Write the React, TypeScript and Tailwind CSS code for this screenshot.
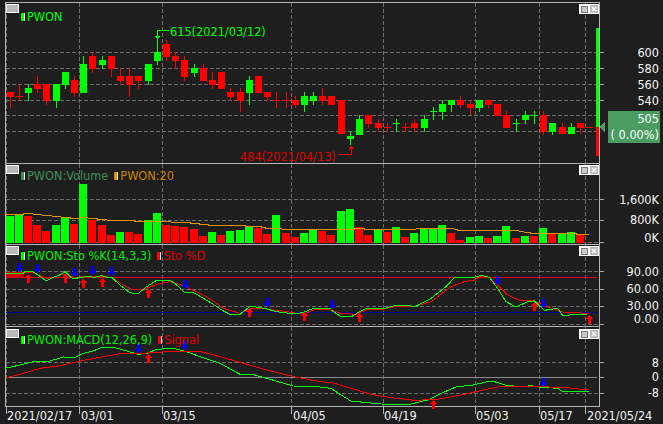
import React from 'react';

type P = [number, number];
type Candle = [number, number, number, number, number, 'r' | 'g'];

const RED = '#ff0000';
const GREEN = '#00ff00';
const GRID = '#6c6c6c';

// coordinates below were read at 3x, hence the /3
const pts = (arr: P[], ox: number, oy: number) => arr.map(([x, y]) => `${ox + x / 3},${oy + y / 3}`).join(' ');

const candlesA: Candle[] = [
  [31, 276, 323, 276, 291, 'r'], [58, 252, 302, 288, 291, 'r'], [85, 252, 302, 264, 279, 'g'], [112, 228, 279, 252, 267, 'r'],
  [139, 252, 315, 252, 303, 'r'], [169, 252, 324, 252, 303, 'g'], [196, 216, 267, 216, 255, 'g'], [223, 228, 291, 240, 279, 'r'],
  [250, 168, 279, 192, 279, 'g'], [277, 156, 219, 168, 207, 'r'], [307, 168, 207, 180, 195, 'g'], [334, 168, 231, 168, 207, 'r'],
  [361, 204, 255, 228, 243, 'r'], [388, 204, 291, 228, 255, 'r'], [415, 228, 267, 228, 243, 'r'], [445, 192, 255, 192, 243, 'g'],
  [472, 108, 195, 156, 183, 'g'], [499, 120, 183, 132, 171, 'r'], [526, 156, 207, 168, 183, 'r'], [553, 168, 243, 180, 231, 'r'],
  [583, 192, 231, 204, 219, 'g'], [610, 192, 243, 204, 243, 'r'], [637, 216, 267, 240, 255, 'r'], [664, 216, 267, 216, 267, 'r'],
  [691, 264, 303, 276, 291, 'r'], [721, 264, 336, 276, 303, 'r'], [748, 228, 315, 240, 279, 'g'], [775, 228, 279, 228, 279, 'r'],
  [802, 276, 303, 276, 291, 'r'], [829, 276, 324, 300, 303, 'r'], [859, 276, 324, 300, 303, 'r'], [886, 288, 324, 300, 315, 'r'],
  [913, 276, 336, 288, 315, 'g'], [940, 276, 315, 288, 303, 'g'], [967, 264, 315, 288, 303, 'r'], [994, 288, 315, 288, 315, 'r'],
];

const candlesB: Candle[] = [
  [31, 300, 402, 300, 402, 'r'], [58, 393, 435, 408, 417, 'g'], [85, 345, 405, 357, 405, 'g'], [112, 345, 384, 345, 372, 'r'],
  [142, 357, 396, 369, 384, 'r'], [169, 369, 396, 381, 384, 'r'], [196, 357, 396, 369, 372, 'g'], [223, 369, 396, 381, 384, 'r'],
  [250, 357, 396, 369, 384, 'r'], [280, 345, 396, 357, 384, 'g'], [307, 321, 360, 333, 336, 'g'], [334, 300, 360, 312, 336, 'g'],
  [361, 300, 336, 300, 315, 'g'], [388, 288, 324, 300, 315, 'r'], [418, 300, 345, 312, 324, 'r'], [445, 300, 336, 300, 324, 'g'],
  [472, 300, 324, 300, 315, 'r'], [499, 312, 348, 312, 348, 'r'], [526, 333, 384, 345, 384, 'r'], [556, 357, 396, 369, 372, 'g'],
  [583, 333, 372, 345, 360, 'g'], [610, 333, 372, 345, 348, 'g'], [637, 333, 405, 345, 396, 'r'], [664, 369, 405, 369, 396, 'g'],
  [694, 369, 402, 381, 402, 'r'], [721, 369, 402, 381, 402, 'g'], [748, 369, 402, 369, 384, 'r'],
];

const volA: [number, number, 'r' | 'g'][] = [
  [30, 159, 'g'], [57, 156, 'g'], [84, 159, 'r'], [111, 186, 'r'], [138, 204, 'r'], [168, 186, 'g'], [195, 165, 'g'], [222, 183, 'r'],
  [249, 63, 'g'], [276, 171, 'r'], [306, 186, 'r'], [333, 216, 'r'], [360, 207, 'g'], [387, 207, 'r'], [414, 213, 'r'], [444, 171, 'g'],
  [471, 150, 'g'], [498, 186, 'r'], [525, 189, 'r'], [552, 192, 'r'], [582, 198, 'r'], [609, 219, 'r'], [636, 207, 'g'], [663, 216, 'r'],
  [690, 204, 'g'], [720, 201, 'g'], [747, 189, 'g'], [774, 195, 'r'], [801, 213, 'r'], [828, 156, 'g'], [858, 210, 'r'], [885, 222, 'r'],
  [912, 210, 'g'], [939, 201, 'g'], [966, 204, 'r'], [993, 216, 'r'],
];

const volB: [number, number, 'r' | 'g'][] = [
  [30, 144, 'g'], [57, 138, 'g'], [84, 192, 'r'], [111, 216, 'r'], [141, 198, 'g'], [168, 207, 'r'], [195, 192, 'g'], [222, 222, 'r'],
  [249, 210, 'g'], [279, 195, 'g'], [306, 195, 'g'], [333, 186, 'g'], [360, 210, 'r'], [387, 231, 'r'], [417, 222, 'g'], [444, 219, 'g'],
  [471, 225, 'r'], [498, 219, 'g'], [525, 189, 'g'], [555, 225, 'r'], [582, 219, 'g'], [609, 219, 'r'], [636, 195, 'g'], [663, 210, 'r'],
  [693, 210, 'g'], [720, 207, 'g'], [747, 213, 'r'],
];

const maA: P[] = [[15, 150], [20, 154], [70, 154], [72, 151], [98, 151], [100, 154], [125, 154], [127, 157], [155, 157], [157, 160], [182, 160], [184, 163], [210, 163], [212, 166], [237, 166], [239, 163], [263, 163], [265, 166], [292, 166], [294, 169], [320, 169], [322, 172], [402, 172], [404, 175], [512, 175], [514, 178], [570, 178], [572, 181], [597, 181], [599, 184], [624, 184], [626, 187], [735, 187], [737, 190], [783, 190], [785, 193], [795, 193], [797, 196], [845, 196], [847, 199], [993, 199]];
const maB: P[] = [[0, 199], [70, 199], [72, 196], [100, 196], [102, 199], [210, 199], [212, 199], [345, 196], [368, 196], [370, 199], [379, 199], [381, 202], [563, 202], [565, 205], [578, 205], [580, 208], [597, 208], [599, 211], [735, 211], [737, 214], [773, 214]];

const stoKA: P[] = [[18, 84], [70, 84], [75, 79], [95, 79], [115, 90], [138, 108], [160, 97], [175, 92], [195, 80], [210, 95], [222, 102], [240, 97], [265, 95], [285, 97], [305, 92], [320, 97], [335, 97], [360, 120], [385, 140], [400, 145], [415, 145], [440, 125], [470, 106], [510, 106], [528, 118], [553, 142], [583, 144], [610, 160], [640, 178], [665, 195], [690, 208], [720, 208], [750, 184], [775, 187], [800, 192], [830, 200], [860, 204], [890, 207], [915, 200], [940, 190], [993, 192]];
const stoDA: P[] = [[18, 88], [60, 84], [95, 82], [120, 92], [140, 100], [160, 97], [185, 88], [200, 88], [222, 98], [250, 95], [290, 95], [320, 95], [340, 100], [370, 120], [395, 133], [415, 135], [440, 130], [470, 118], [510, 110], [530, 115], [560, 127], [610, 150], [640, 168], [670, 190], [720, 205], [750, 190], [800, 192], [860, 200], [890, 205], [915, 205], [950, 192], [993, 192]];
const stoKB: P[] = [[0, 195], [30, 215], [60, 216], [85, 200], [105, 190], [155, 192], [185, 183], [210, 181], [255, 184], [300, 160], [345, 125], [370, 98], [400, 97], [430, 97], [450, 91], [475, 97], [500, 130], [525, 170], [555, 186], [590, 170], [610, 168], [640, 196], [680, 190], [695, 211], [770, 207]];
const stoDB: P[] = [[0, 195], [30, 205], [75, 208], [105, 195], [155, 193], [185, 186], [250, 184], [300, 170], [360, 125], [400, 110], [430, 105], [450, 93], [475, 97], [530, 150], [570, 168], [605, 166], [640, 182], [700, 202], [773, 205]];

const macdA: P[] = [[15, 130], [60, 120], [100, 110], [150, 108], [190, 96], [225, 97], [250, 85], [280, 78], [305, 67], [340, 67], [370, 75], [415, 88], [440, 85], [470, 73], [520, 70], [560, 80], [600, 95], [660, 115], [720, 148], [755, 148], [800, 160], [880, 183], [950, 185], [993, 190]];
const sigA: P[] = [[18, 158], [60, 148], [120, 130], [180, 122], [240, 108], [300, 97], [360, 86], [440, 84], [500, 80], [600, 79], [660, 95], [740, 118], [800, 135], [880, 155], [950, 168], [993, 174]];
const macdB: P[] = [[0, 190], [30, 210], [60, 228], [100, 232], [150, 237], [235, 238], [290, 225], [330, 205], [375, 186], [425, 180], [470, 170], [490, 170], [525, 181], [570, 185], [600, 182], [625, 186], [680, 190], [695, 200], [773, 200]];
const sigB: P[] = [[0, 172], [60, 190], [120, 208], [180, 218], [250, 226], [320, 223], [400, 208], [470, 192], [500, 186], [625, 185], [680, 187], [735, 190], [745, 193], [773, 193]];

const vGrid = [6, 79, 162, 291, 383, 475, 539, 585];

const Candles = ({ data, ox }: { data: Candle[]; ox: number }) => (
  <>
    {data.map(([x, wt, wb, bt, bb, c], i) => {
      const cx = ox + Math.floor(x / 3);
      const fill = c === 'r' ? RED : GREEN;
      return (
        <g key={i} fill={fill}>
          <rect x={cx} y={wt / 3} width={1} height={(wb - wt) / 3} />
          <rect x={cx - 3} y={bt / 3} width={7} height={(bb - bt) / 3} />
        </g>
      );
    })}
  </>
);

// arrows built from pixel rows so the head stays solid
const ArrowUp = ({ x, top, color = RED }: { x: number; top: number; color?: string }) => (
  <g fill={color}>
    <rect x={x} y={top} width={1} height={1} />
    <rect x={x - 1} y={top + 1} width={3} height={1} />
    <rect x={x - 2} y={top + 2} width={5} height={1} />
    <rect x={x - 3} y={top + 3} width={7} height={1} />
    <rect x={x - 1} y={top + 4} width={3} height={5} />
  </g>
);

const ArrowDown = ({ x, bottom, color = '#0000ff' }: { x: number; bottom: number; color?: string }) => (
  <g fill={color}>
    <rect x={x} y={bottom - 1} width={1} height={1} />
    <rect x={x - 1} y={bottom - 2} width={3} height={1} />
    <rect x={x - 2} y={bottom - 3} width={5} height={1} />
    <rect x={x - 3} y={bottom - 4} width={7} height={1} />
    <rect x={x - 1} y={bottom - 9} width={3} height={5} />
  </g>
);

const Grid = ({ top, bottom, rows, ticks = rows }: { top: number; bottom: number; rows: number[]; ticks?: number[] }) => (
  <g stroke={GRID} strokeWidth={1} fill="none">
    {vGrid.map((x) => (
      <line key={x} x1={x + 0.5} x2={x + 0.5} y1={top} y2={bottom} strokeDasharray="4 2" />
    ))}
    {rows.map((y) => (
      <line key={y} x1={6} x2={599} y1={y + 0.5} y2={y + 0.5} strokeDasharray="4 2" />
    ))}
    {ticks.map((y) => (
      <line key={y} x1={599} x2={604} y1={y + 0.5} y2={y + 0.5} stroke="#a8a8a8" />
    ))}
  </g>
);

const Marker = ({ color }: { color: string }) => (
  <span className={`block w-[4px] h-[8px] rounded-[1px] border-r border-white ${color}`} />
);

const PaneButtons = ({ top }: { top: string }) => (
  <>
    <div className={`absolute left-0 w-[13px] h-[9px] bg-[#b9b9b9] border border-white ${top}`} />
    <div className={`absolute right-0 flex ${top}`}>
      <div className="w-[10px] h-[10px] bg-white flex items-center justify-center">
        <div className="w-[7px] h-[7px] bg-[#c8c8c8] border border-[#777]" />
      </div>
      <div className="w-[10px] h-[10px] bg-[#b9b9b9] border border-white flex items-center justify-center">
        <svg width="6" height="6" viewBox="0 0 6 6"><path d="M1 1L5 5M5 1L1 5" stroke="#fff" strokeWidth="1.4" /></svg>
      </div>
    </div>
  </>
);

const Pane = ({ y, h, legend, btn, bottom, axis, children }: { y: number; h: number; legend: React.ReactNode; btn: string; bottom?: boolean; axis: React.ReactNode; children: React.ReactNode }) => (
  <div className="flex">
    <div className={`relative ml-[5px] w-[595px] border-x border-t border-[#b4b4b4] ${bottom ? 'border-b' : ''} ${h === 161 ? 'h-[161px]' : h === 82 ? 'h-[82px]' : 'h-[81px]'}`}>
      <svg
        className="block w-[593px] h-full overflow-visible"
        viewBox={`6 ${y + 1} 593 ${bottom ? h - 2 : h - 1}`}
        preserveAspectRatio="none"
        shapeRendering="crispEdges"
      >
        {children}
      </svg>
      <PaneButtons top={btn} />
      {legend}
    </div>
    {axis}
  </div>
);

const Line = ({ points, color }: { points: string; color: string }) => (
  <polyline points={points} fill="none" stroke={color} strokeWidth={1} />
);

const AxisText = ({ children, className = '' }: { children: React.ReactNode; className?: string }) => (
  <span className={`block h-[13px] leading-[13px] ${className}`}>{children}</span>
);

export default function App() {
  return (
    <div className="w-[663px] h-[424px] bg-[#1e1e1e] pt-[2px] text-[12.6px] text-[#f4f4f4] font-['DejaVu_Sans_Condensed','DejaVu_Sans','Noto_Sans',sans-serif]">
      {/* price */}
      <Pane
        y={2}
        h={161}
        btn="top-[1px]"
        legend={
          <>
            <div className="absolute left-[15px] top-[6px] flex items-center gap-[2px] text-[#00ff00] leading-[16px]">
              <Marker color="bg-[#00ff00]" />
              <span>PWON</span>
            </div>
            <span className="absolute left-[164px] top-[21px] leading-[16px] text-[#00ff00]">615(2021/03/12)</span>
            <span className="absolute left-[234px] top-[146px] leading-[16px] text-[#e00000]">484(2021/04/13)</span>
          </>
        }
        axis={
          <div className="flex-1 flex flex-col items-end gap-[3px] pr-[4px] pt-[44px]">
            <AxisText>600</AxisText>
            <AxisText>580</AxisText>
            <AxisText>560</AxisText>
            <AxisText>540</AxisText>
            <div className="mt-[1px] w-[52px] h-[32px] -mr-[1px] bg-[#4a9c62] flex flex-col items-end pr-[1px] text-white leading-[16px]">
              <span>505</span>
              <span>( 0.00%)</span>
            </div>
          </div>
        }
      >
        <Grid top={3} bottom={163} rows={[52, 68, 84, 100, 115, 131]} ticks={[52, 68, 84, 100]} />
        <Candles data={candlesA} ox={0} />
        <Candles data={candlesB} ox={331} />
        <rect x={586} y={127} width={7} height={1} fill={RED} />
        <rect x={596} y={28} width={3} height={99} fill={GREEN} />
        <rect x={596} y={127} width={3} height={29} fill={RED} />
        <polygon points="599,127 605,122 605,133" fill="#4a9c62" />
        {/* high / low leader lines */}
        <path d="M157 38V30H169" stroke={GREEN} fill="none" />
        <polygon points="155,36 160,36 157.5,39" fill={GREEN} />
        <path d="M351 148V154H339" stroke={RED} fill="none" />
        <polygon points="349,149 354,149 351.5,146" fill={RED} />
      </Pane>

      {/* volume */}
      <Pane
        y={163}
        h={81}
        btn="top-[1px]"
        legend={
          <div className="absolute left-[15px] top-[4px] flex items-center leading-[16px]">
            <Marker color="bg-[#3f8f57]" />
            <span className="ml-[2px] text-[#3f8f57]">PWON:Volume</span>
            <span className="ml-[6px]"><Marker color="bg-[#e09000]" /></span>
            <span className="ml-[2px] text-[#c98500]">PWON:20</span>
          </div>
        }
        axis={
          <div className="flex-1 flex flex-col items-end pr-[4px] pt-[30px]">
            <AxisText>1,600K</AxisText>
            <AxisText className="mt-[7px]">800K</AxisText>
            <AxisText className="mt-[5px]">0K</AxisText>
          </div>
        }
      >
        <Grid top={164} bottom={244} rows={[199, 220, 242]} />
        {volA.map(([x, t, c]) => (
          <rect key={x} x={Math.floor(x / 3) - 4} y={163 + t / 3} width={8} height={80 - t / 3} fill={c === 'r' ? RED : GREEN} />
        ))}
        {volB.map(([x, t, c]) => (
          <rect key={x} x={331 + Math.floor(x / 3) - 4} y={163 + t / 3} width={8} height={80 - t / 3} fill={c === 'r' ? RED : GREEN} />
        ))}
        <Line points={pts(maA, 0, 163)} color="#e39300" />
        <Line points={pts(maB, 331, 163)} color="#e39300" />
      </Pane>

      {/* stochastic */}
      <Pane
        y={244}
        h={82}
        btn="top-[1px]"
        legend={
          <div className="absolute left-[15px] top-[3px] flex items-center leading-[16px]">
            <Marker color="bg-[#00ff00]" />
            <span className="ml-[2px] text-[#00ee00]">PWON:Sto %K(14,3,3)</span>
            <span className="ml-[6px]"><Marker color="bg-[#ff0000]" /></span>
            <span className="ml-[2px] text-[#e00000]">Sto %D</span>
          </div>
        }
        axis={
          <div className="flex-1 flex flex-col items-end gap-[4px] pr-[4px] pt-[21px]">
            <AxisText>90.00</AxisText>
            <AxisText>60.00</AxisText>
            <AxisText>30.00</AxisText>
            <AxisText className="-mt-[4px]">0.00</AxisText>
          </div>
        }
      >
        <Grid top={245} bottom={326} rows={[271, 289, 306, 324]} />
        <rect x={6} y={272} width={18} height={5} fill="#d00000" />
        <rect x={6} y={277} width={591} height={1} fill="#e00000" />
        <rect x={6} y={312} width={591} height={1} fill="#000090" />
        <Line points={pts(stoDA, 0, 245)} color={RED} />
        <Line points={pts(stoKA, 0, 245)} color={GREEN} />
        <Line points={pts(stoDB, 331, 245)} color={RED} />
        <Line points={pts(stoKB, 331, 245)} color={GREEN} />
        {[[19, 272], [37, 273], [74, 277], [92, 275], [111, 276], [185, 289], [267, 307], [332, 309], [497, 285], [543, 308]].map(([x, b]) => (
          <ArrowDown key={x} x={x} bottom={b} />
        ))}
        {[[28, 274], [65, 274], [83, 279], [102, 278], [148, 289], [249, 308], [304, 312], [359, 313], [534, 302], [589, 315]].map(([x, t]) => (
          <ArrowUp key={x} x={x} top={t} />
        ))}
      </Pane>

      {/* macd */}
      <Pane
        y={326}
        h={81}
        bottom
        btn="top-[2px]"
        legend={
          <div className="absolute left-[15px] top-[5px] flex items-center leading-[16px]">
            <Marker color="bg-[#00ff00]" />
            <span className="ml-[2px] text-[#00ee00]">PWON:MACD(12,26,9)</span>
            <span className="ml-[6px]"><Marker color="bg-[#ff0000]" /></span>
            <span className="ml-[2px] text-[#e00000]">Signal</span>
          </div>
        }
        axis={
          <div className="flex-1 flex flex-col items-end pr-[4px] pt-[30px]">
            <AxisText>8</AxisText>
            <AxisText className="mt-[1px]">0</AxisText>
            <AxisText className="mt-[3px]">-8</AxisText>
          </div>
        }
      >
        <Grid top={327} bottom={406} rows={[362, 393]} />
        <rect x={6} y={377} width={591} height={1} fill="#8c8c8c" />
        <rect x={599} y={377} width={5} height={1} fill="#a8a8a8" />
        <Line points={pts(macdA, 0, 325)} color={GREEN} />
        <Line points={pts(sigA, 0, 325)} color={RED} />
        <Line points={pts(macdB, 331, 325)} color={GREEN} />
        <Line points={pts(sigB, 331, 325)} color={RED} />
        <ArrowDown x={138} bottom={353} />
        <ArrowDown x={184} bottom={350} />
        <ArrowDown x={543} bottom={387} />
        <ArrowUp x={148} top={354} />
        <ArrowUp x={433} top={400} />
      </Pane>

      {/* dates */}
      <div className="relative flex pl-[7px] leading-[14px] pt-[2px]">
        <svg className="absolute left-0 top-0 overflow-visible" width="663" height="8" shapeRendering="crispEdges">
          {vGrid.map((x) => (
            <rect key={x} x={x} y={0} width={1} height={7} fill="#b4b4b4" />
          ))}
        </svg>
        <span className="w-[74px]">2021/02/17</span>
        <span className="w-[82px]">03/01</span>
        <span className="w-[130px]">03/15</span>
        <span className="w-[91px]">04/05</span>
        <span className="w-[92px]">04/19</span>
        <span className="w-[64px]">05/03</span>
        <span className="w-[47px]">05/17</span>
        <span>2021/05/24</span>
      </div>
    </div>
  );
}
